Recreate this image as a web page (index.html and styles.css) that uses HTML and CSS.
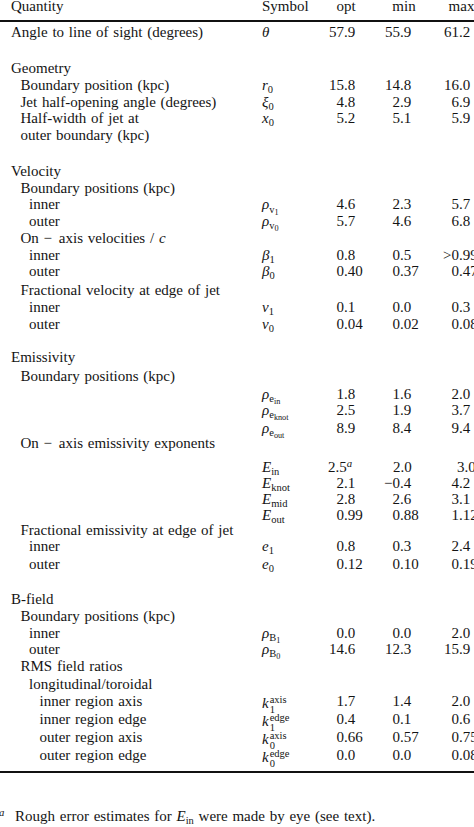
FILE: index.html
```html
<!DOCTYPE html>
<html lang="en">
<head>
<meta charset="utf-8">
<title>Model parameters</title>
<link rel="stylesheet" href="styles.css">
</head>
<body>
<div class="tbl">
  <div class="row head">
    <div class="lab">Quantity</div>
    <div class="sym">Symbol</div>
    <div class="hd">opt</div>
    <div class="hd">min</div>
    <div class="hd">max</div>
  </div>
  <div class="rule"></div>
  <div class="body">
    <div class="row sp36">
      <div class="lab">Angle to line of sight (degrees)</div>
      <div class="sym"><i>θ</i></div>
      <div class="i">57</div><div class="f">.9</div>
      <div class="i">55</div><div class="f">.9</div>
      <div class="i">61</div><div class="f">.2</div>
    </div>

    <div class="row"><div class="lab">Geometry</div></div>
    <div class="row">
      <div class="lab l1">Boundary position (kpc)</div>
      <div class="sym"><i>r</i><sub>0</sub></div>
      <div class="i">15</div><div class="f">.8</div>
      <div class="i">14</div><div class="f">.8</div>
      <div class="i">16</div><div class="f">.0</div>
    </div>
    <div class="row">
      <div class="lab l1">Jet half-opening angle (degrees)</div>
      <div class="sym"><i>ξ</i><sub>0</sub></div>
      <div class="i">4</div><div class="f">.8</div>
      <div class="i">2</div><div class="f">.9</div>
      <div class="i">6</div><div class="f">.9</div>
    </div>
    <div class="row">
      <div class="lab l1">Half-width of jet at</div>
      <div class="sym"><i>x</i><sub>0</sub></div>
      <div class="i">5</div><div class="f">.2</div>
      <div class="i">5</div><div class="f">.1</div>
      <div class="i">5</div><div class="f">.9</div>
    </div>
    <div class="row sp36"><div class="lab l1">outer boundary (kpc)</div></div>

    <div class="row"><div class="lab">Velocity</div></div>
    <div class="row"><div class="lab l1">Boundary positions (kpc)</div></div>
    <div class="row">
      <div class="lab l2">inner</div>
      <div class="sym"><i>ρ</i><sub>v<sub>1</sub></sub></div>
      <div class="i">4</div><div class="f">.6</div>
      <div class="i">2</div><div class="f">.3</div>
      <div class="i">5</div><div class="f">.7</div>
    </div>
    <div class="row">
      <div class="lab l2">outer</div>
      <div class="sym"><i>ρ</i><sub>v<sub>0</sub></sub></div>
      <div class="i">5</div><div class="f">.7</div>
      <div class="i">4</div><div class="f">.6</div>
      <div class="i">6</div><div class="f">.8</div>
    </div>
    <div class="row"><div class="lab l1">On <span class="minus">−</span> axis velocities / <i>c</i></div></div>
    <div class="row">
      <div class="lab l2">inner</div>
      <div class="sym"><i>β</i><sub>1</sub></div>
      <div class="i">0</div><div class="f">.8</div>
      <div class="i">0</div><div class="f">.5</div>
      <div class="i">&gt;0</div><div class="f">.99</div>
    </div>
    <div class="row h19">
      <div class="lab l2">outer</div>
      <div class="sym"><i>β</i><sub>0</sub></div>
      <div class="i">0</div><div class="f">.40</div>
      <div class="i">0</div><div class="f">.37</div>
      <div class="i">0</div><div class="f">.47</div>
    </div>
    <div class="row"><div class="lab l1">Fractional velocity at edge of jet</div></div>
    <div class="row">
      <div class="lab l2">inner</div>
      <div class="sym"><i>v</i><sub>1</sub></div>
      <div class="i">0</div><div class="f">.1</div>
      <div class="i">0</div><div class="f">.0</div>
      <div class="i">0</div><div class="f">.3</div>
    </div>
    <div class="row sp33">
      <div class="lab l2">outer</div>
      <div class="sym"><i>v</i><sub>0</sub></div>
      <div class="i">0</div><div class="f">.04</div>
      <div class="i">0</div><div class="f">.02</div>
      <div class="i">0</div><div class="f">.08</div>
    </div>

    <div class="row h19"><div class="lab">Emissivity</div></div>
    <div class="row h18"><div class="lab l1">Boundary positions (kpc)</div></div>
    <div class="row">
      <div class="lab"></div>
      <div class="sym"><i>ρ</i><sub>e<sub>in</sub></sub></div>
      <div class="i">1</div><div class="f">.8</div>
      <div class="i">1</div><div class="f">.6</div>
      <div class="i">2</div><div class="f">.0</div>
    </div>
    <div class="row h18">
      <div class="lab"></div>
      <div class="sym"><i>ρ</i><sub>e<sub>knot</sub></sub></div>
      <div class="i">2</div><div class="f">.5</div>
      <div class="i">1</div><div class="f">.9</div>
      <div class="i">3</div><div class="f">.7</div>
    </div>
    <div class="row h15">
      <div class="lab"></div>
      <div class="sym"><i>ρ</i><sub>e<sub>out</sub></sub></div>
      <div class="i">8</div><div class="f">.9</div>
      <div class="i">8</div><div class="f">.4</div>
      <div class="i">9</div><div class="f">.4</div>
    </div>
    <div class="row h24"><div class="lab l1">On <span class="minus">−</span> axis emissivity exponents</div></div>
    <div class="row h16">
      <div class="lab"></div>
      <div class="sym"><i>E</i><sub>in</sub></div>
      <div class="whole wo">2.5<sup><i>a</i></sup></div>
      <div class="whole wm">2.0</div>
      <div class="whole wx">3.0</div>
    </div>
    <div class="row h16">
      <div class="lab"></div>
      <div class="sym"><i>E</i><sub>knot</sub></div>
      <div class="i">2</div><div class="f">.1</div>
      <div class="i">−0</div><div class="f">.4</div>
      <div class="i">4</div><div class="f">.2</div>
    </div>
    <div class="row h16">
      <div class="lab"></div>
      <div class="sym"><i>E</i><sub>mid</sub></div>
      <div class="i">2</div><div class="f">.8</div>
      <div class="i">2</div><div class="f">.6</div>
      <div class="i">3</div><div class="f">.1</div>
    </div>
    <div class="row h15">
      <div class="lab"></div>
      <div class="sym"><i>E</i><sub>out</sub></div>
      <div class="i">0</div><div class="f">.99</div>
      <div class="i">0</div><div class="f">.88</div>
      <div class="i">1</div><div class="f">.12</div>
    </div>
    <div class="row h16"><div class="lab l1">Fractional emissivity at edge of jet</div></div>
    <div class="row h18">
      <div class="lab l2">inner</div>
      <div class="sym"><i>e</i><sub>1</sub></div>
      <div class="i">0</div><div class="f">.8</div>
      <div class="i">0</div><div class="f">.3</div>
      <div class="i">2</div><div class="f">.4</div>
    </div>
    <div class="row sp35">
      <div class="lab l2">outer</div>
      <div class="sym"><i>e</i><sub>0</sub></div>
      <div class="i">0</div><div class="f">.12</div>
      <div class="i">0</div><div class="f">.10</div>
      <div class="i">0</div><div class="f">.19</div>
    </div>

    <div class="row"><div class="lab">B-field</div></div>
    <div class="row"><div class="lab l1">Boundary positions (kpc)</div></div>
    <div class="row">
      <div class="lab l2">inner</div>
      <div class="sym"><i>ρ</i><sub>B<sub>1</sub></sub></div>
      <div class="i">0</div><div class="f">.0</div>
      <div class="i">0</div><div class="f">.0</div>
      <div class="i">2</div><div class="f">.0</div>
    </div>
    <div class="row">
      <div class="lab l2">outer</div>
      <div class="sym"><i>ρ</i><sub>B<sub>0</sub></sub></div>
      <div class="i">14</div><div class="f">.6</div>
      <div class="i">12</div><div class="f">.3</div>
      <div class="i">15</div><div class="f">.9</div>
    </div>
    <div class="row h18"><div class="lab l1">RMS field ratios</div></div>
    <div class="row"><div class="lab l2">longitudinal/toroidal</div></div>
    <div class="row h18">
      <div class="lab l3">inner region axis</div>
      <div class="sym"><i>k</i><span class="ss"><span>axis</span><span>1</span></span></div>
      <div class="i">1</div><div class="f">.7</div>
      <div class="i">1</div><div class="f">.4</div>
      <div class="i">2</div><div class="f">.0</div>
    </div>
    <div class="row h18">
      <div class="lab l3">inner region edge</div>
      <div class="sym"><i>k</i><span class="ss"><span>edge</span><span>1</span></span></div>
      <div class="i">0</div><div class="f">.4</div>
      <div class="i">0</div><div class="f">.1</div>
      <div class="i">0</div><div class="f">.6</div>
    </div>
    <div class="row h18">
      <div class="lab l3">outer region axis</div>
      <div class="sym"><i>k</i><span class="ss"><span>axis</span><span>0</span></span></div>
      <div class="i">0</div><div class="f">.66</div>
      <div class="i">0</div><div class="f">.57</div>
      <div class="i">0</div><div class="f">.75</div>
    </div>
    <div class="row last">
      <div class="lab l3">outer region edge</div>
      <div class="sym"><i>k</i><span class="ss"><span>edge</span><span>0</span></span></div>
      <div class="i">0</div><div class="f">.0</div>
      <div class="i">0</div><div class="f">.0</div>
      <div class="i">0</div><div class="f">.08</div>
    </div>
  </div>
  <div class="rule"></div>
</div>
<p class="foot"><sup class="fa"><i>a</i></sup>Rough error estimates for <i>E</i><sub>in</sub> were made by eye (see text).</p>
</body>
</html>
```

FILE: styles.css
```css
html, body {
  margin: 0;
  padding: 0;
  background: #ffffff;
  overflow: hidden;
}

body {
  width: 474px;
  height: 827px;
  font-family: "Liberation Serif", "Times New Roman", serif;
  font-size: 15px;
  color: #141414;
  word-spacing: 1px;
}

.tbl {
  width: 489px;
}

.row {
  display: grid;
  grid-template-columns: 251px 52px 30px 30px 26px 30px 29px 30px;
  padding-left: 11px;
  height: 16.7px;
  line-height: 12px;
  white-space: nowrap;
}

.head {
  height: 20px;
}

.hd {
  grid-column: span 2;
  text-align: center;
  padding-left: 4px;
}

.rule {
  height: 2px;
  background: #111111;
}

.body {
  padding-top: 4.34px;
}

.h15 { height: 15px; }
.h16 { height: 16px; }
.h18 { height: 18px; }
.h19 { height: 19px; }
.h24 { height: 24px; }
.sp33 { height: 33px; }
.sp35 { height: 35px; }
.sp36 { height: 36px; }
.last { height: 22.06px; }

.l1 { padding-left: 9.5px; }
.l2 { padding-left: 18px; }
.l3 { padding-left: 28.5px; }

.i {
  text-align: right;
}

.f {
  text-align: left;
}

.whole {
  grid-column: span 2;
  text-align: left;
}

.wo { padding-left: 14px; }
.wm { padding-left: 19px; }
.wx { padding-left: 27px; }

.minus {
  margin-right: 2px;
}

sub {
  font-size: 0.7em;
  vertical-align: -0.3em;
  line-height: 0;
  word-spacing: 0;
}

sub sub {
  font-size: 0.78em;
  vertical-align: -0.28em;
}

sup {
  font-size: 0.72em;
  vertical-align: 0.5em;
  line-height: 0;
}

.ss {
  display: inline-flex;
  flex-direction: column;
  font-size: 0.7em;
  line-height: 0.95;
  vertical-align: 5px;
  margin-left: 1px;
}

.foot {
  margin: 37.3px 0 0 0;
  line-height: 12px;
  white-space: nowrap;
}

.fa {
  display: inline-block;
  width: 16px;
  margin-left: -1px;
  vertical-align: 0.45em;
  line-height: 0;
}
```
